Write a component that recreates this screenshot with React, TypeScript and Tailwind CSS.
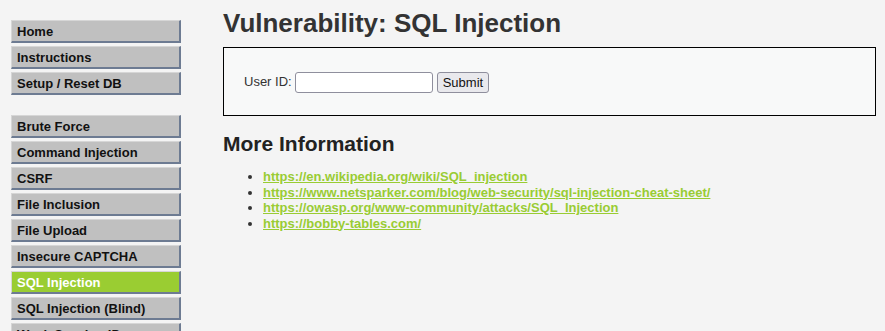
export default function App(){

const menuTop = ["Home","Instructions","Setup / Reset DB"]
const menuVuln = ["Brute Force","Command Injection","CSRF","File Inclusion","File Upload","Insecure CAPTCHA","SQL Injection","SQL Injection (Blind)","Weak Session IDs"]

const links = [
"https://en.wikipedia.org/wiki/SQL_injection",
"https://www.netsparker.com/blog/web-security/sql-injection-cheat-sheet/",
"https://owasp.org/www-community/attacks/SQL_Injection",
"https://bobby-tables.com/"
]

function MenuItem({label}:{label:string}){
const active = label==="SQL Injection"
return(
<li
className={
active
? "h-[23px] pl-[5px] pt-[1px] flex items-center bg-[#9acd32] text-white font-bold text-[13px] border-t border-l border-[#d6d6d6] border-r-2 border-b-2 border-r-[#6d7b92] border-b-[#6d7b92]"
: "h-[23px] pl-[5px] pt-[1px] flex items-center bg-[#c0c0c0] text-[#111] font-bold text-[13px] border-t border-l border-[#d6d6d6] border-r-2 border-b-2 border-r-[#6d7b92] border-b-[#6d7b92]"
}
>
{label}
</li>
)
}

return(

<div className="w-[885px] h-[331px] overflow-hidden bg-[#f4f4f4] text-[#333] font-['Liberation_Sans',Arial,sans-serif] flex">

{/* MENU */}

<div className="w-[181px] pl-[11px] pt-[20px] shrink-0">

<ul className="flex flex-col gap-[3px]">
{menuTop.map(m=>(
<MenuItem key={m} label={m}/>
))}
</ul>

<ul className="flex flex-col gap-[3px] mt-[20px]">
{menuVuln.map(m=>(
<MenuItem key={m} label={m}/>
))}
</ul>

</div>

{/* BODY */}

<div className="ml-[42px] w-[653px]">

<h1 className="text-[26px] leading-[30px] font-bold text-[#333] mt-[8px]">
Vulnerability: SQL Injection
</h1>

<div className="mt-[9px] h-[69px] border border-black bg-[#f8f9f9] flex items-center pl-[20px] pt-[1px]">

<span className="text-[13px] text-[#333]">User ID:</span>

<input
type="text"
className="ml-[3px] w-[138px] h-[21px] bg-white border border-[#8f8f9d] rounded-[3px]"
/>

<button className="ml-[4px] h-[21px] px-[5px] bg-[#e9e9ed] border border-[#8f8f9d] rounded-[3px] text-[13px] text-[#111] leading-none">
Submit
</button>

</div>

<h2 className="text-[21px] leading-[24px] font-bold text-[#222] mt-[16px]">
More Information
</h2>

<ul className="list-disc pl-[40px] mt-[13px] marker:text-[#333]">
{links.map(l=>(
<li key={l} className="text-[13px] leading-[15.5px]">
<a href="#" className="font-bold text-[#99cc33] underline">
{l}
</a>
</li>
))}
</ul>

</div>

</div>

)

}
